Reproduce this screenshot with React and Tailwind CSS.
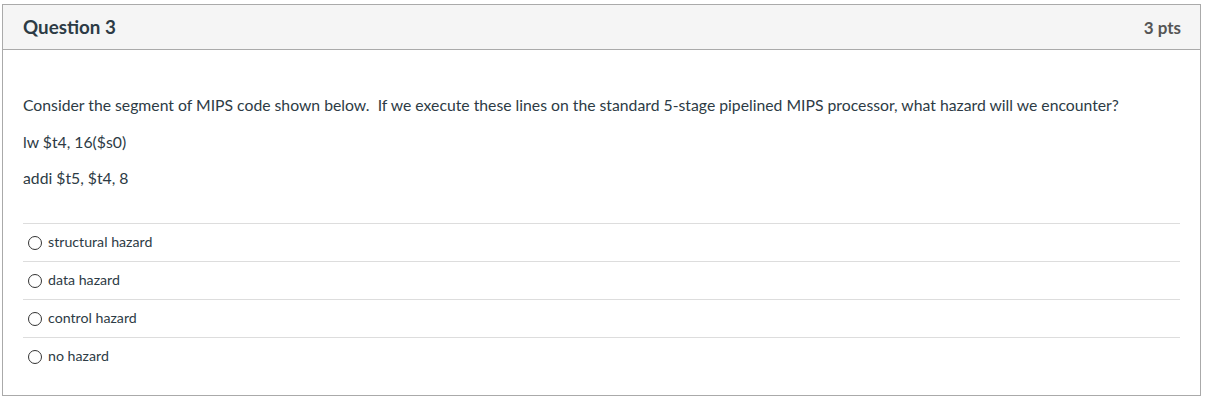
export default function App() {
  const options = ["structural hazard", "data hazard", "control hazard", "no hazard"];
  return (
    <div className="w-[1206px] h-[403px] bg-white pt-[4px] pl-[2px]" style={{ fontFamily: "Lato, 'Open Sans', sans-serif" }}>
      <div className="w-[1199px] h-[392px] border border-[#aaaaaa] bg-white flex flex-col">
        <div className="h-[45px] bg-[#f5f5f5] border-b border-[#aaaaaa] flex items-center justify-between pl-[20px] pr-[19px]">
          <span className="text-[18.8px] font-bold text-[#2d3b45] leading-none">Question 3</span>
          <span className="text-[17px] font-bold text-[#555555] leading-none">3 pts</span>
        </div>
        <div className="flex flex-col px-[20px] pt-[44px] text-[#2d3b45]">
          <p className="text-[15.75px] leading-[21px]">
            Consider the segment of MIPS code shown below.&nbsp; If we execute these lines on the standard 5-stage pipelined MIPS processor, what hazard will we encounter?
          </p>
          <p className="text-[15.75px] leading-[21px] mt-[16px]">lw $t4, 16($s0)</p>
          <p className="text-[15.75px] leading-[21px] mt-[15px]">addi $t5, $t4, 8</p>
          <div className="mt-[35px] flex flex-col">
            {options.map((o) => (
              <div key={o} className="h-[38px] border-t border-[#dddddd] flex items-center pl-[5px]">
                <span className="w-[14px] h-[14px] rounded-full border border-[#333333] bg-white mr-[6px]"></span>
                <span className="text-[14.2px] leading-[18px] pb-[2px] text-[#2d3b45]">{o}</span>
              </div>
            ))}
          </div>
        </div>
      </div>
    </div>
  );
}
